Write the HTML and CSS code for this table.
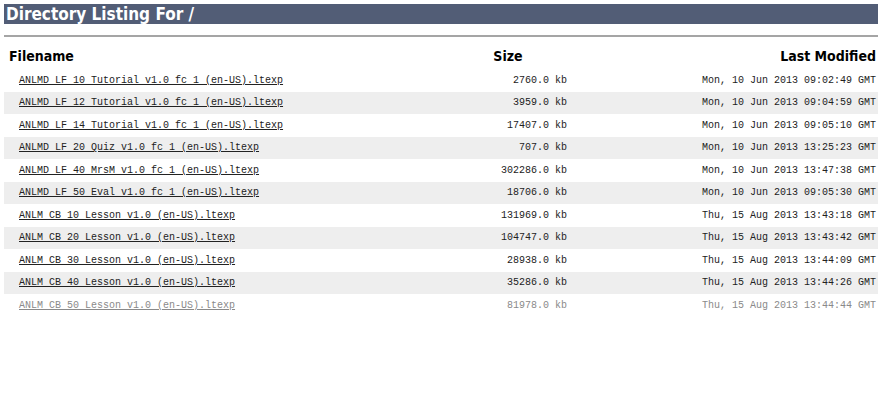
FILE: index.html
```html
<!DOCTYPE html>
<html>
<head>
<meta charset="utf-8">
<title>Directory Listing For /</title>
<link rel="stylesheet" href="styles.css">
</head>
<body>
<h1 class="banner">Directory Listing For /</h1>
<hr class="rule">
<div class="listing">
  <div class="row head">
    <div class="c-name">Filename</div>
    <div class="c-size">Size</div>
    <div class="c-date">Last Modified</div>
  </div>
  <div class="row"><div class="c-name"><a href="#">ANLMD LF 10 Tutorial v1.0 fc 1 (en-US).ltexp</a></div><div class="c-size">2760.0 kb</div><div class="c-date">Mon, 10 Jun 2013 09:02:49 GMT</div></div>
  <div class="row alt"><div class="c-name"><a href="#">ANLMD LF 12 Tutorial v1.0 fc 1 (en-US).ltexp</a></div><div class="c-size">3959.0 kb</div><div class="c-date">Mon, 10 Jun 2013 09:04:59 GMT</div></div>
  <div class="row"><div class="c-name"><a href="#">ANLMD LF 14 Tutorial v1.0 fc 1 (en-US).ltexp</a></div><div class="c-size">17407.0 kb</div><div class="c-date">Mon, 10 Jun 2013 09:05:10 GMT</div></div>
  <div class="row alt"><div class="c-name"><a href="#">ANLMD LF 20 Quiz v1.0 fc 1 (en-US).ltexp</a></div><div class="c-size">707.0 kb</div><div class="c-date">Mon, 10 Jun 2013 13:25:23 GMT</div></div>
  <div class="row"><div class="c-name"><a href="#">ANLMD LF 40 MrsM v1.0 fc 1 (en-US).ltexp</a></div><div class="c-size">302286.0 kb</div><div class="c-date">Mon, 10 Jun 2013 13:47:38 GMT</div></div>
  <div class="row alt"><div class="c-name"><a href="#">ANLMD LF 50 Eval v1.0 fc 1 (en-US).ltexp</a></div><div class="c-size">18706.0 kb</div><div class="c-date">Mon, 10 Jun 2013 09:05:30 GMT</div></div>
  <div class="row"><div class="c-name"><a href="#">ANLM CB 10 Lesson v1.0 (en-US).ltexp</a></div><div class="c-size">131969.0 kb</div><div class="c-date">Thu, 15 Aug 2013 13:43:18 GMT</div></div>
  <div class="row alt"><div class="c-name"><a href="#">ANLM CB 20 Lesson v1.0 (en-US).ltexp</a></div><div class="c-size">104747.0 kb</div><div class="c-date">Thu, 15 Aug 2013 13:43:42 GMT</div></div>
  <div class="row"><div class="c-name"><a href="#">ANLM CB 30 Lesson v1.0 (en-US).ltexp</a></div><div class="c-size">28938.0 kb</div><div class="c-date">Thu, 15 Aug 2013 13:44:09 GMT</div></div>
  <div class="row alt"><div class="c-name"><a href="#">ANLM CB 40 Lesson v1.0 (en-US).ltexp</a></div><div class="c-size">35286.0 kb</div><div class="c-date">Thu, 15 Aug 2013 13:44:26 GMT</div></div>
  <div class="row faded"><div class="c-name"><a href="#">ANLM CB 50 Lesson v1.0 (en-US).ltexp</a></div><div class="c-size">81978.0 kb</div><div class="c-date">Thu, 15 Aug 2013 13:44:44 GMT</div></div>
</div>
</body>
</html>
```
FILE: styles.css
```css
html, body {
  background: #ffffff;
}
body {
  margin: 4px;
  font-family: "DejaVu Sans Condensed", "DejaVu Sans", sans-serif;
  color: #000;
}
.banner {
  margin: 0;
  height: 20px;
  line-height: 20px;
  padding: 0 2px;
  background: #525d76;
  color: #ffffff;
  font-size: 17px;
  font-weight: bold;
  white-space: nowrap;
  overflow: hidden;
}
.rule {
  margin: 11px 0 0 0;
  border: 0;
  height: 2px;
  background: #a5a5a5;
}
.listing {
  display: flex;
  flex-direction: column;
}
.row {
  display: grid;
  grid-template-columns: 1fr 118px 309px;
  align-items: center;
  height: 22.5px;
  padding: 0 2px 0 5px;
  font-family: "Liberation Mono", "Courier New", monospace;
  font-size: 10px;
  color: #222;
}
.row.alt {
  background: #eeeeee;
}
.row.head {
  height: 32px;
  padding-top: 6px;
  box-sizing: border-box;
  font-family: "DejaVu Sans Condensed", "DejaVu Sans", sans-serif;
  font-size: 14px;
  font-weight: bold;
  color: #000;
}
.c-name {
  text-align: left;
  white-space: nowrap;
}
.c-name a {
  margin-left: 10px;
  color: #222;
  text-decoration: underline;
}
.c-size {
  text-align: right;
  white-space: nowrap;
}
.head .c-size {
  text-align: center;
}
.c-date {
  text-align: right;
  white-space: nowrap;
}
.row.faded,
.row.faded .c-name a {
  color: #8a8a8a;
}
```
